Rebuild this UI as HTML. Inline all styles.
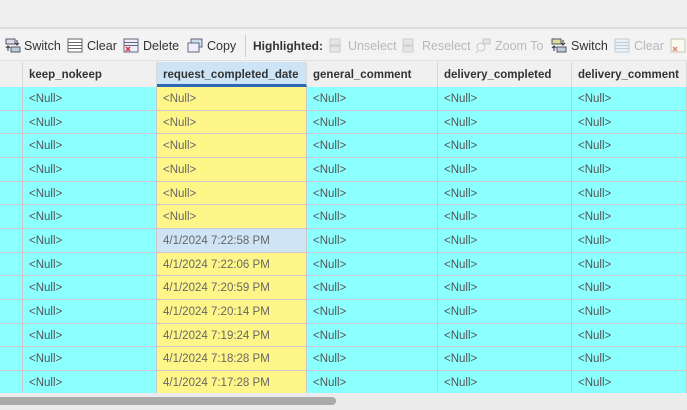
<!DOCTYPE html>
<html><head><style>
*{margin:0;padding:0;box-sizing:border-box}
body{width:687px;height:410px;overflow:hidden;background:#f0f0f0;font-family:"Liberation Sans",sans-serif;position:relative}
.top{position:absolute;left:0;top:0;width:687px;height:29px;background:#efefef;border-bottom:2px solid #dcdcdc}
.tb{position:absolute;left:0;top:31px;width:687px;height:30px;background:#f3f3f3;border-bottom:1px solid #e0e0e0;font-size:12.5px;color:#333}
.tb span{position:absolute;top:8px;white-space:nowrap}
.dis{color:#b8b8b8}
.ic{position:absolute;top:7px;width:16px;height:15px}
.hdr{position:absolute;top:62px;height:25px;background:#f0f0f0;border-right:1px solid #d8d8d8;font-size:11.5px;font-weight:bold;color:#333;padding:7px 0 0 6px;white-space:nowrap;overflow:hidden}
.row{position:absolute;left:0;width:687px;height:23.67px}
.c{position:absolute;top:0;height:100%;border-right:1px solid #c8c8c8;border-bottom:1px solid #cfc8cc;font-size:11.5px;color:#555;padding:6px 0 0 6px;white-space:nowrap;overflow:hidden}
.cy{background:#8cffff}.ye{background:#fff68a;color:#666}.bl{background:#cfe4f4;color:#666}
</style></head><body>
<div class="top"></div>
<div class="tb">
<svg class="ic" style="left:5px" viewBox="0 0 16 15"><rect x="1" y="1" width="9" height="5" fill="#dde" stroke="#556" /><rect x="6" y="9" width="9" height="5" fill="#bcd" stroke="#556"/><path d="M12 2v5m-2-2l2 2 2-2M3 13V8m-2 2l2-2 2 2" stroke="#334" fill="none"/></svg>
<span style="left:24px">Switch</span>
<svg class="ic" style="left:67px" viewBox="0 0 16 15"><rect x="1" y="1" width="14" height="13" fill="#fff" stroke="#666"/><path d="M1 4.5h14M1 7.5h14M1 10.5h14" stroke="#666"/></svg>
<span style="left:87px">Clear</span>
<svg class="ic" style="left:123px" viewBox="0 0 16 15"><rect x="1" y="1" width="14" height="13" fill="#eef" stroke="#667"/><path d="M1 4.5h14M1 7.5h14" stroke="#667"/><path d="M3 9l4 4m0-4l-4 4" stroke="#d33" stroke-width="1.5"/></svg>
<span style="left:143px">Delete</span>
<svg class="ic" style="left:187px" viewBox="0 0 16 15"><rect x="4" y="1" width="11" height="8" fill="#cde" stroke="#667"/><rect x="1" y="5" width="11" height="9" fill="#eef" stroke="#667"/></svg>
<span style="left:207px">Copy</span>
<div style="position:absolute;left:245px;top:4px;width:1px;height:22px;background:#ccc"></div>
<span style="left:253px;font-weight:bold;font-size:12px">Highlighted:</span>
<svg class="ic" style="left:329px;opacity:.35" viewBox="0 0 16 15"><rect x="1" y="1" width="10" height="6" fill="#ccc" stroke="#888"/><rect x="1" y="8" width="10" height="6" fill="#ccc" stroke="#888"/></svg>
<span class="dis" style="left:348px">Unselect</span>
<svg class="ic" style="left:402px;opacity:.35" viewBox="0 0 16 15"><rect x="1" y="1" width="10" height="6" fill="#ccc" stroke="#888"/><rect x="1" y="8" width="10" height="6" fill="#ccc" stroke="#888"/></svg>
<span class="dis" style="left:422px">Reselect</span>
<svg class="ic" style="left:475px;opacity:.4" viewBox="0 0 16 15"><circle cx="6" cy="9" r="4" fill="none" stroke="#68a"/><path d="M3 13l-2 2" stroke="#68a"/><rect x="8" y="1" width="7" height="5" fill="#ccc" stroke="#888"/></svg>
<span class="dis" style="left:495px">Zoom To</span>
<svg class="ic" style="left:551px" viewBox="0 0 16 15"><rect x="1" y="1" width="9" height="5" fill="#dd9" stroke="#556"/><rect x="6" y="9" width="9" height="5" fill="#bcd" stroke="#556"/><path d="M12 2v5m-2-2l2 2 2-2M3 13V8m-2 2l2-2 2 2" stroke="#334" fill="none"/></svg>
<span style="left:571px">Switch</span>
<svg class="ic" style="left:614px;opacity:.4" viewBox="0 0 16 15"><rect x="1" y="1" width="14" height="13" fill="#def" stroke="#79a"/><path d="M1 4.5h14M1 7.5h14M1 10.5h14" stroke="#79a"/></svg>
<span class="dis" style="left:634px">Clear</span>
<svg class="ic" style="left:670px;opacity:.6" viewBox="0 0 16 15"><rect x="1" y="1" width="14" height="13" fill="#ffe" stroke="#aa8"/><path d="M3 9l4 4m0-4l-4 4" stroke="#d33" stroke-width="1.5"/></svg>
</div>
<div class="hdr" style="left:0;width:23px"></div>
<div class="hdr" style="left:23px;width:134px">keep_nokeep</div>
<div class="hdr" style="left:157px;width:150px;background:#cce4f5;border-bottom:3px solid #2a6ab0;padding-top:7px">request_completed_date</div>
<div class="hdr" style="left:307px;width:131px">general_comment</div>
<div class="hdr" style="left:438px;width:134px">delivery_completed</div>
<div class="hdr" style="left:572px;width:115px">delivery_comment</div>
<div id="rows"></div>
<div style="position:absolute;left:0;top:393px;width:687px;height:17px;background:#ececec"></div>
<div style="position:absolute;left:-4px;top:397px;width:340px;height:8px;border-radius:4px;background:#aaa"></div>
<script>
var d=["<Null>","<Null>","<Null>","<Null>","<Null>","<Null>","4/1/2024 7:22:58 PM","4/1/2024 7:22:06 PM","4/1/2024 7:20:59 PM","4/1/2024 7:20:14 PM","4/1/2024 7:19:24 PM","4/1/2024 7:18:28 PM","4/1/2024 7:17:28 PM"];
var h="";function e(s){return s.replace(/</g,"&lt;").replace(/>/g,"&gt;")}
for(var i=0;i<13;i++){var t=87+i*23.67;
h+='<div class="row" style="top:'+t+'px">'+
'<div class="c cy" style="left:0;width:23px"></div>'+
'<div class="c cy" style="left:23px;width:134px">&lt;Null&gt;</div>'+
'<div class="c '+(i==6?'bl':'ye')+'" style="left:157px;width:150px">'+e(d[i])+'</div>'+
'<div class="c cy" style="left:307px;width:131px">&lt;Null&gt;</div>'+
'<div class="c cy" style="left:438px;width:134px">&lt;Null&gt;</div>'+
'<div class="c cy" style="left:572px;width:115px">&lt;Null&gt;</div></div>';}
document.getElementById("rows").innerHTML=h;
</script>
</body></html>
